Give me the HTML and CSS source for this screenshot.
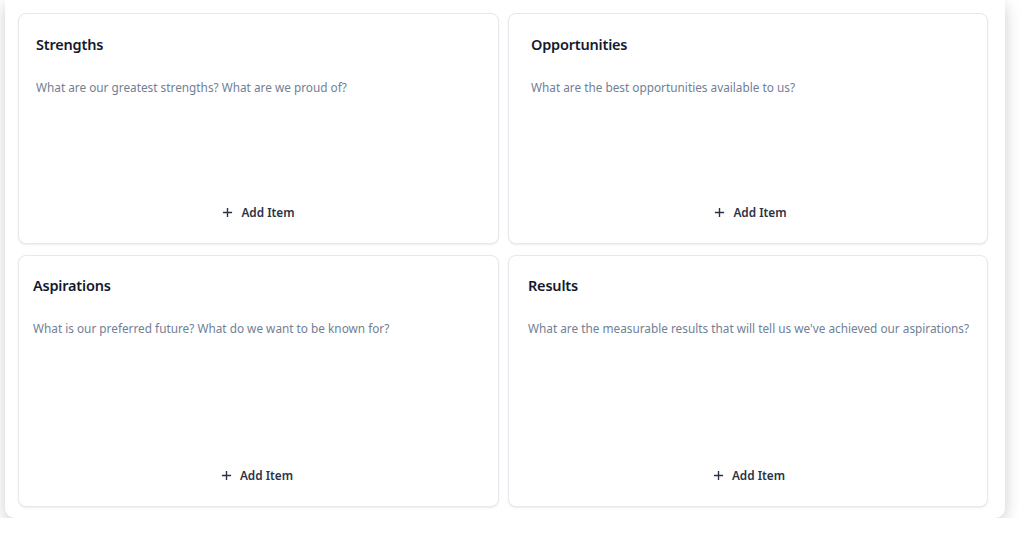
FILE: index.html
```html
<!DOCTYPE html>
<html>
<head>
<meta charset="utf-8">
<link rel="stylesheet" href="styles.css">
</head>
<body>
<div class="board">
  <section class="card card-tl">
    <h2 class="card-title">Strengths</h2>
    <p class="card-desc">What are our greatest strengths? What are we proud of?</p>
    <button class="add-btn"><svg class="plus" viewBox="0 0 12 12"><path d="M6 1v10M1 6h10"/></svg>Add Item</button>
  </section>
  <section class="card card-tr">
    <h2 class="card-title">Opportunities</h2>
    <p class="card-desc">What are the best opportunities available to us?</p>
    <button class="add-btn"><svg class="plus" viewBox="0 0 12 12"><path d="M6 1v10M1 6h10"/></svg>Add Item</button>
  </section>
  <section class="card card-bl">
    <h2 class="card-title">Aspirations</h2>
    <p class="card-desc">What is our preferred future? What do we want to be known for?</p>
    <button class="add-btn"><svg class="plus" viewBox="0 0 12 12"><path d="M6 1v10M1 6h10"/></svg>Add Item</button>
  </section>
  <section class="card card-br">
    <h2 class="card-title">Results</h2>
    <p class="card-desc">What are the measurable results that will tell us we've achieved our aspirations?</p>
    <button class="add-btn"><svg class="plus" viewBox="0 0 12 12"><path d="M6 1v10M1 6h10"/></svg>Add Item</button>
  </section>
</div>
</body>
</html>
```

FILE: styles.css
```css
html, body {
  margin: 0;
  padding: 0;
  background: #ffffff;
  font-family: "Noto Sans", "Open Sans", sans-serif;
}

.board {
  box-sizing: border-box;
  width: 1000px;
  margin: 0 0 0 5px;
  padding: 13px 17px 11px 13px;
  background: #ffffff;
  border-radius: 0 0 10px 10px;
  box-shadow: 0 5px 16px rgba(0, 0, 0, 0.2);
  display: grid;
  grid-template-columns: 481px 480px;
  grid-template-rows: 231px 252px;
  column-gap: 9px;
  row-gap: 11px;
}

.card {
  box-sizing: border-box;
  background: #ffffff;
  border: 1px solid #e6e8ec;
  border-radius: 8px;
  box-shadow: 0 1px 2px rgba(0, 0, 0, 0.08);
  display: flex;
  flex-direction: column;
  padding: 20px 17px 23px;
}

.card-tl { padding-left: 17px; }
.card-tr { padding-left: 22px; }
.card-bl { padding-top: 19px; padding-left: 14px; }
.card-br { padding-top: 19px; padding-left: 19px; }

.card-title {
  margin: 0;
  font-size: 14.5px;
  font-weight: 600;
  line-height: 20px;
  color: #141a2e;
  letter-spacing: -0.2px;
}

.card-desc {
  margin: 25px 0 0;
  font-size: 11.8px;
  line-height: 16px;
  color: #718096;
}

.add-btn {
  margin-top: auto;
  align-self: center;
  display: flex;
  align-items: center;
  gap: 8px;
  background: none;
  border: none;
  padding: 0;
  font-family: inherit;
  font-size: 11.8px;
  font-weight: 600;
  color: #2a3344;
  line-height: 16px;
}

.plus {
  width: 11px;
  height: 11px;
  fill: none;
  stroke: #2a3344;
  stroke-width: 1.5;
}
```
